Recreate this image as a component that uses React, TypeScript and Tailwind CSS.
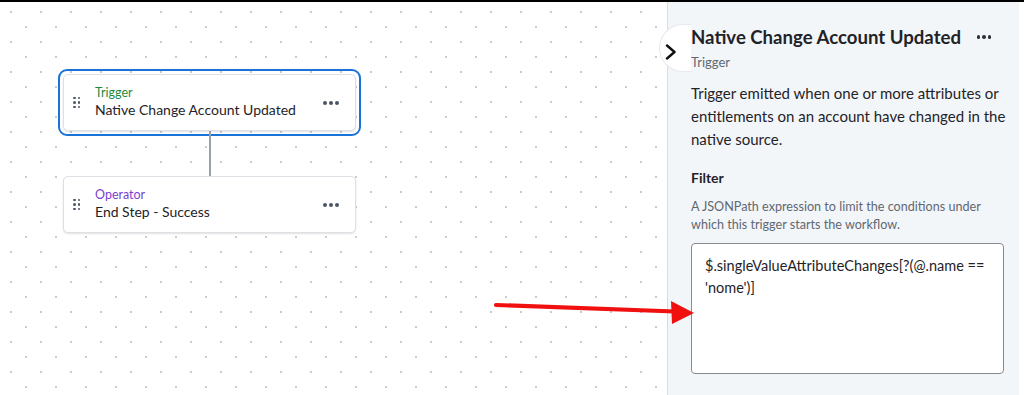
const FONT = "font-['Lato','Liberation_Sans',sans-serif]"

function Handle() {
  return (
    <div className="grid grid-cols-2 gap-x-[2px] gap-y-[2px]">
      {Array.from({ length: 6 }).map((_, i) => (
        <span key={i} className="block w-[2.5px] h-[2.5px] rounded-full bg-[#4b5563]" />
      ))}
    </div>
  )
}

function Dots({ color = 'bg-[#4b5563]', size = 'w-[4px] h-[4px]' }: { color?: string; size?: string }) {
  return (
    <div className="flex items-center gap-[2px]">
      <span className={`block rounded-full ${size} ${color}`} />
      <span className={`block rounded-full ${size} ${color}`} />
      <span className={`block rounded-full ${size} ${color}`} />
    </div>
  )
}

interface StepCardProps {
  kind: string
  kindColor: string
  title: string
}

function StepCard({ kind, kindColor, title }: StepCardProps) {
  return (
    <div className="w-[293px] h-[57px] bg-white rounded-[5px] border border-[#dde1e6] shadow-[0_1px_2px_rgba(0,0,0,0.12)] flex items-center pl-[9px] pr-[16px]">
      <Handle />
      <div className="ml-[15px] flex-1 flex flex-col">
        <span className={`text-[12.5px] leading-[15px] ${kindColor}`}>{kind}</span>
        <span className="text-[14px] leading-[20px] text-[#1f2328]">{title}</span>
      </div>
      <Dots />
    </div>
  )
}

export default function App() {
  return (
    <div className={`relative w-full h-[395px] flex border-t-2 border-black bg-white overflow-hidden ${FONT}`}>
      {/* Canvas */}
      <div className="relative flex-1 [background-image:radial-gradient(circle,#c9ccd1_0.8px,transparent_1.3px),radial-gradient(circle,#c9ccd1_0.8px,transparent_1.3px)] [background-size:30px_30px] [background-position:-4px_-5px,11px_10px]">
        {/* Selected trigger node */}
        <div className="absolute left-[58px] top-[67px] p-[3px] rounded-[9px] border-2 border-[#1a73d9]">
          <StepCard kind="Trigger" kindColor="text-[#1e8a3c]" title="Native Change Account Updated" />
        </div>
        {/* Connector */}
        <div className="absolute left-[209px] top-[129px] w-[1.5px] h-[45px] bg-[#9aa0a8]" />
        {/* Operator node */}
        <div className="absolute left-[63px] top-[174px]">
          <StepCard kind="Operator" kindColor="text-[#7b3fd0]" title="End Step - Success" />
        </div>
      </div>

      {/* Side panel */}
      <div className="relative w-[352px] mr-[5px] bg-[#f3f6f9] border-l border-[#d8dde3] pl-[23px] pr-[15px] pt-[22px]">
        {/* Collapse tab */}
        <div className="absolute left-[-9px] top-[22px] w-[32px] h-[48px] rounded-l-[24px] bg-white border-l border-y border-[#e6e9ed] border-r-0">
          <svg className="absolute left-[5px] top-[19px]" width="12" height="16" viewBox="0 0 12 16">
            <polyline points="2,1.5 9.5,8 2,14.5" fill="none" stroke="#111" strokeWidth="2.4" strokeLinecap="round" strokeLinejoin="round" />
          </svg>
        </div>
        <div className="relative flex items-center justify-between">
          <h2 className="text-[18.6px] leading-[26px] font-bold text-[#1f2328]">Native Change Account Updated</h2>
          <div className="mr-[13px]">
            <Dots color="bg-[#2b2f36]" size="w-[3.5px] h-[3.5px]" />
          </div>
        </div>
        <p className="mt-[3px] text-[13px] leading-[18px] text-[#5f6872]">Trigger</p>
        <div className="mt-[11px] text-[15px] leading-[23px] text-[#1f2328] whitespace-nowrap">
          <p>Trigger emitted when one or more attributes or</p>
          <p>entitlements on an account have changed in the</p>
          <p>native source.</p>
        </div>
        <h3 className="mt-[17px] text-[14px] leading-[20px] font-bold text-[#1f2328]">Filter</h3>
        <div className="mt-[10px] text-[12.6px] leading-[18px] text-[#5f6872] whitespace-nowrap">
          <p>A JSONPath expression to limit the conditions under</p>
          <p>which this trigger starts the workflow.</p>
        </div>
        <div className="mt-[9px] h-[131px] bg-white border border-[#868b93] rounded-[4px] px-[13px] pt-[11px] text-[14.5px] leading-[22px] text-[#1f2328]">
          <p>$.singleValueAttributeChanges[?(@.name ==</p>
          <p>'nome')]</p>
        </div>
      </div>

      {/* Annotation arrow */}
      <svg className="absolute left-0 top-0 pointer-events-none" width="1024" height="395" viewBox="0 0 1024 395">
        <line x1="496" y1="303" x2="675" y2="309.5" stroke="#f01010" strokeWidth="4.2" strokeLinecap="round" />
        <polygon points="671,299 694,311 672,322" fill="#f01010" />
      </svg>
    </div>
  )
}
